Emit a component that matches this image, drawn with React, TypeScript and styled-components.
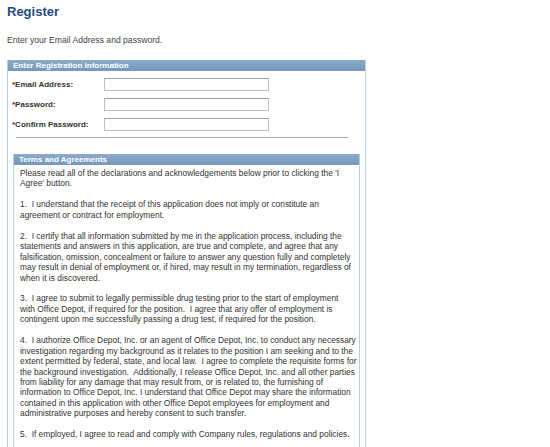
import React from 'react';
import styled, { createGlobalStyle } from 'styled-components';

const GlobalStyle = createGlobalStyle`
  html, body {
    margin: 0;
    padding: 0;
    background: #ffffff;
  }
  body {
    font-family: "Liberation Sans", Arial, sans-serif;
    color: #333333;
  }
`;

// Page frame
const Page = styled.div`
  padding: 0 0 0 7px;
  width: 550px;
  height: 447px;
  overflow: hidden;
  box-sizing: border-box;
`;

const Title = styled.h1`
  margin: 0;
  padding-top: 5px;
  font-size: 13px;
  line-height: 13px;
  font-weight: bold;
  color: #274a82;
`;

const Intro = styled.p`
  margin: 17px 0 0;
  font-size: 8.6px;
  line-height: 11px;
  color: #444444;
`;

// Group boxes
const GroupBox = styled.div<{ $inset?: boolean }>`
  border: 1px solid #b9cde0;
  border-top: none;
  background: #ffffff;
  width: ${p => (p.$inset ? '347px' : '359px')};
  box-sizing: border-box;
  overflow: hidden;
  margin: ${p => (p.$inset ? '0 0 0 5px' : '14px 0 0')};
`;

const GroupHeader = styled.div`
  height: 11px;
  line-height: 11px;
  padding-left: 5px;
  font-size: 8px;
  font-weight: bold;
  color: #ffffff;
  background: linear-gradient(#8cabca, #7597bc);
`;

// Registration form
const FormGrid = styled.div`
  display: grid;
  grid-template-columns: 92px 165px;
  row-gap: 7px;
  align-items: center;
  padding: 7px 0 0 4px;
`;

const Label = styled.label`
  font-size: 8px;
  font-weight: bold;
  color: #333333;
`;

const TextInput = styled.input`
  height: 13px;
  width: 165px;
  box-sizing: border-box;
  border: 1px solid #bdbdbd;
  border-top-color: #a3a3a3;
  padding: 0;
  margin: 0;
  background: #ffffff;
`;

const Separator = styled.hr`
  margin: 6px 17px 16px 8px;
  border: none;
  border-top: 1px solid #a9a9a9;
  height: 0;
`;

// Terms
const TermsBody = styled.div`
  padding: 3px 0 0 6px;
  font-size: 8.4px;
  line-height: 10.45px;
  color: #333333;
  white-space: nowrap;
`;

const Paragraph = styled.p`
  margin: 0 0 10.45px;
`;

const paragraphs: string[][] = [
  [
    "Please read all of the declarations and acknowledgements below prior to clicking the 'I",
    "Agree' button.",
  ],
  [
    '1.  I understand that the receipt of this application does not imply or constitute an',
    'agreement or contract for employment.',
  ],
  [
    '2.  I certify that all information submitted by me in the application process, including the',
    'statements and answers in this application, are true and complete, and agree that any',
    'falsification, omission, concealment or failure to answer any question fully and completely',
    'may result in denial of employment or, if hired, may result in my termination, regardless of',
    'when it is discovered.',
  ],
  [
    '3.  I agree to submit to legally permissible drug testing prior to the start of employment',
    'with Office Depot, if required for the position.  I agree that any offer of employment is',
    'contingent upon me successfully passing a drug test, if required for the position.',
  ],
  [
    '4.  I authorize Office Depot, Inc. or an agent of Office Depot, Inc. to conduct any necessary',
    'investigation regarding my background as it relates to the position I am seeking and to the',
    'extent permitted by federal, state, and local law.  I agree to complete the requisite forms for',
    'the background investigation.  Additionally, I release Office Depot, Inc. and all other parties',
    'from liability for any damage that may result from, or is related to, the furnishing of',
    'information to Office Depot, Inc. I understand that Office Depot may share the information',
    'contained in this application with other Office Depot employees for employment and',
    'administrative purposes and hereby consent to such transfer.',
  ],
  ['5.  If employed, I agree to read and comply with Company rules, regulations and policies.'],
];

const fields = ['*Email Address:', '*Password:', '*Confirm Password:'];

const App: React.FC = () => (
  <>
    <GlobalStyle />
    <Page>
      <Title>Register</Title>
      <Intro>Enter your Email Address and password.</Intro>

      <GroupBox>
        <GroupHeader>Enter Registration Information</GroupHeader>
        <FormGrid>
          {fields.map(f => (
            <React.Fragment key={f}>
              <Label>{f}</Label>
              <TextInput type={f.includes('Password') ? 'password' : 'text'} />
            </React.Fragment>
          ))}
        </FormGrid>
        <Separator />

        <GroupBox $inset>
          <GroupHeader>Terms and Agreements</GroupHeader>
          <TermsBody>
            {paragraphs.map((lines, i) => (
              <Paragraph key={i}>
                {lines.map((l, j) => (
                  <React.Fragment key={j}>
                    {l.replace(/  /g, '\u00a0 ')}
                    {j < lines.length - 1 && <br />}
                  </React.Fragment>
                ))}
              </Paragraph>
            ))}
          </TermsBody>
        </GroupBox>
      </GroupBox>
    </Page>
  </>
);

export default App;
